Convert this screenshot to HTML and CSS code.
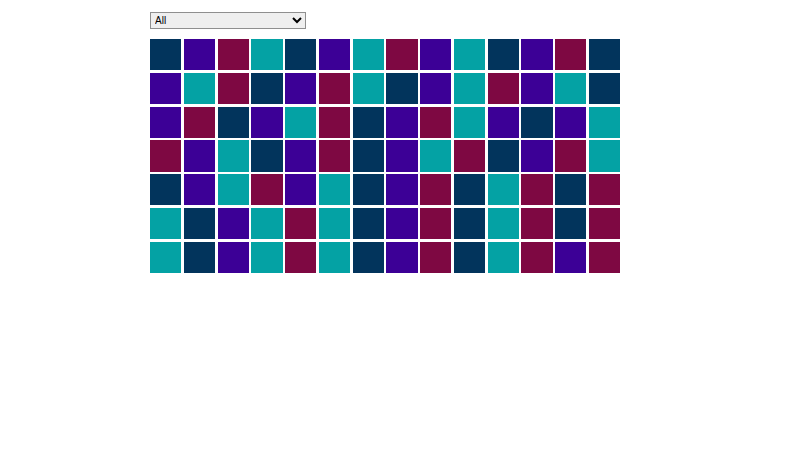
FILE: index.html
```html
<!DOCTYPE html>
<html>
<head>
<meta charset="utf-8">
<link rel="stylesheet" href="styles.css">
</head>
<body>
<div class="page">
  <select class="filter">
    <option>All</option>
    <option>Navy</option>
    <option>Purple</option>
    <option>Crimson</option>
    <option>Teal</option>
  </select>
  <div class="grid" id="grid"></div>
</div>
<script>
var rows = [
  "NPRTNPTRPTNPRN",
  "PTRNPRTNPTRPTN",
  "PRNPTRNPRTPNPT",
  "RPTNPRNPTRNPRT",
  "NPTRPTNPRNTRNR",
  "TNPTRTNPRNTRNR",
  "TNPTRTNPRNTRPR"
];
var names = {N:"navy", P:"purple", R:"crimson", T:"teal"};
var g = document.getElementById("grid");
rows.forEach(function (r) {
  r.split("").forEach(function (c) {
    var d = document.createElement("div");
    d.className = "cell " + names[c];
    g.appendChild(d);
  });
});
</script>
</body>
</html>
```
FILE: styles.css
```css
html, body {
  margin: 0;
  padding: 0;
  background: #ffffff;
  font-family: "Liberation Sans", Arial, sans-serif;
}
.page {
  padding: 12px 0 0 150px;
}
.filter {
  display: block;
  width: 156px;
  height: 17px;
  font-family: "Liberation Sans", Arial, sans-serif;
  font-size: 10px;
  color: #000;
  background: #efefef;
  border: 1px solid #8f8f8f;
  border-radius: 0;
  padding: 0;
  margin: 0 0 10px 0;
}
.grid {
  width: 470px;
  display: grid;
  grid-template-columns: repeat(14, 1fr);
  grid-auto-rows: 31.25px;
  gap: 2.5px;
}
.cell.navy { background: #02345c; }
.cell.purple { background: #3c0096; }
.cell.crimson { background: #7e0842; }
.cell.teal { background: #04a2a4; }
```
